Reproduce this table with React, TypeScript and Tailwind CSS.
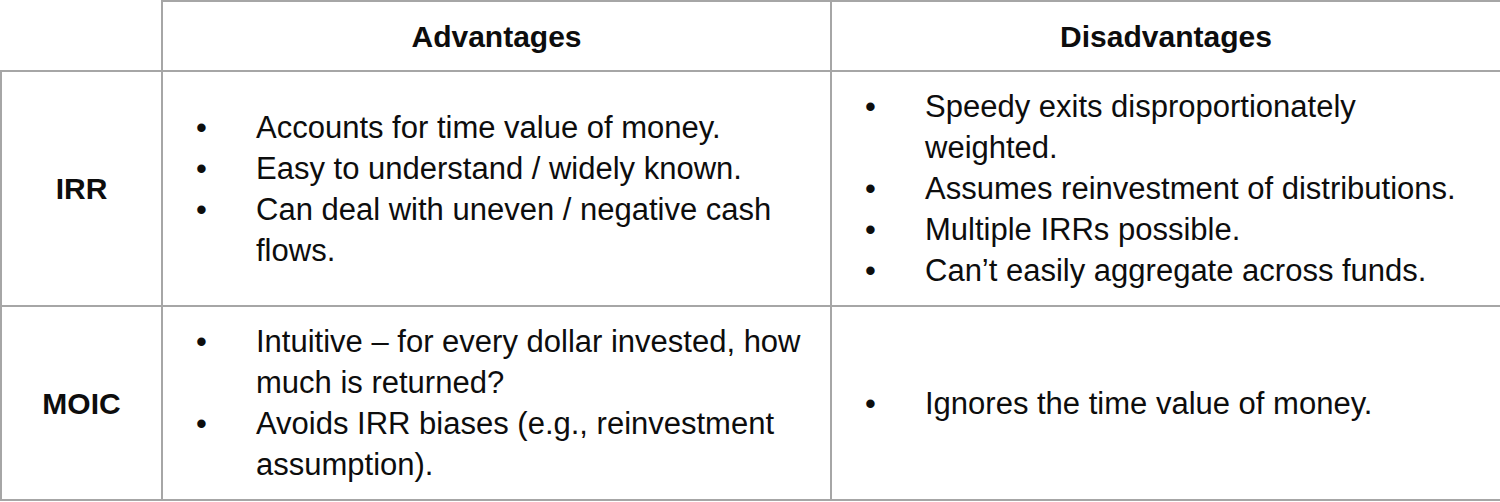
const rows = [
  {
    label: "IRR",
    pros: [
      "Accounts for time value of money.",
      "Easy to understand / widely known.",
      "Can deal with uneven / negative cash flows.",
    ],
    cons: [
      "Speedy exits disproportionately weighted.",
      "Assumes reinvestment of distributions.",
      "Multiple IRRs possible.",
      "Can’t easily aggregate across funds.",
    ],
    height: "h-[235px]",
  },
  {
    label: "MOIC",
    pros: [
      "Intuitive – for every dollar invested, how much is returned?",
      "Avoids IRR biases (e.g., reinvestment assumption).",
    ],
    cons: ["Ignores the time value of money."],
    height: "h-[194px]",
  },
];

const Bullets = ({ items, width }: { items: string[]; width: string }) => (
  <ul className="flex flex-col">
    {items.map((item) => (
      <li key={item} className="flex">
        <span className="w-[93px] shrink-0 pl-[33px]">•</span>
        <span className={width}>{item}</span>
      </li>
    ))}
  </ul>
);

const App = () => {
  return (
    <div
      className="w-[1500px] h-[502px] bg-white text-[#0d0d0d] text-[31px] leading-[41px]"
      style={{ fontFamily: '"Liberation Sans", Arial, sans-serif' }}
    >
      <table className="border-collapse table-fixed w-[1500px]">
        <colgroup>
          <col className="w-[161px]" />
          <col className="w-[669px]" />
          <col className="w-[670px]" />
        </colgroup>
        <thead>
          <tr className="h-[70px]">
            <th className="border-2 border-[#a6a6a6] border-t-0 border-l-0"></th>
            <th className="border-2 border-[#a6a6a6] text-[30px] font-bold text-center">Advantages</th>
            <th className="border-2 border-[#a6a6a6] text-[30px] font-bold text-center">Disadvantages</th>
          </tr>
        </thead>
        <tbody>
          {rows.map((row) => (
            <tr key={row.label} className={row.height}>
              <td className="border-2 border-[#a6a6a6] text-[30px] font-bold text-center align-middle">
                {row.label}
              </td>
              <td className="border-2 border-[#a6a6a6] align-middle">
                <Bullets items={row.pros} width="w-[565px]" />
              </td>
              <td className="border-2 border-[#a6a6a6] align-middle">
                <Bullets items={row.cons} width="w-[548px]" />
              </td>
            </tr>
          ))}
        </tbody>
      </table>
    </div>
  );
};

export default App;
